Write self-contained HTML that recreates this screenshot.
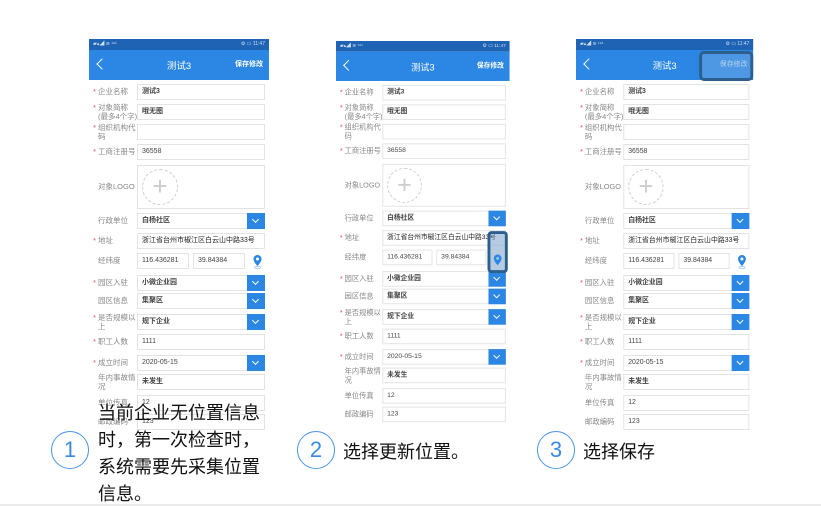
<!DOCTYPE html>
<html><head><meta charset="utf-8">
<style>
*{margin:0;padding:0;box-sizing:border-box}
body{width:821px;height:506px;background:#fff;position:relative;overflow:hidden;font-family:"Liberation Sans","Noto Sans CJK SC",sans-serif}
.ph{position:absolute;width:180px;height:392px;overflow:hidden;background:#fff;transform-origin:0 0}
.sb{position:absolute;left:0;top:0;width:180px;height:11px;background:#1f63b5;color:#cfe0f5;font-size:5px;line-height:11px}
.hd{position:absolute;left:0;top:11px;width:180px;height:30px;background:#2b87e3;color:#fff}
.hd .t{position:absolute;left:0;width:180px;text-align:center;top:8px;font-size:9.5px}
.hd .s{position:absolute;right:6px;top:9px;font-size:7px;font-weight:bold}
.hd .b{position:absolute;left:9px;top:10px;width:8px;height:8px;border-left:1.3px solid #fff;border-bottom:1.3px solid #fff;transform:rotate(45deg)}
.r{position:absolute;left:0;width:180px}
.l{position:absolute;left:9px;font-size:7.5px;color:#888;line-height:8.5px}
.l i{position:absolute;left:-5px;color:#e05050;font-style:normal}
.in{position:absolute;left:48px;width:128px;height:16px;border:1px solid #e3e3e3;font-size:7px;color:#444;line-height:14px;padding-left:4px;background:#fff}
.dd{position:absolute;right:4px;width:18px;height:16px;background:#2b87e3}
.dd:after{content:"";position:absolute;left:6px;top:4px;width:4px;height:4px;border-right:1px solid #fff;border-bottom:1px solid #fff;transform:rotate(45deg)}
.cap{position:absolute;font-size:18px;color:#111;line-height:27px;font-family:"Liberation Sans","Noto Sans CJK SC",sans-serif}
.cir{position:absolute;width:38px;height:38px;border:1.5px solid #4a95e6;border-radius:50%;color:#3a8ae0;font-size:22px;text-align:center;line-height:35px}
.ad{font-weight:normal!important;color:#222!important;font-size:7px!important;white-space:nowrap;overflow:hidden}
</style></head><body>

<div class="ph" style="left:89px;top:39px">
<div class="sb"><span style="margin-left:4px">▰▴◢ ≋ ¹⁹¹</span><span style="position:absolute;right:4px">⚙ ▭ 11:47</span></div>
<div class="hd"><div class="b"></div><div class="t">测试3</div><div class="s">保存修改</div></div>
<div class="r" style="top:45px"><div class="l" style="top:4px"><i>*</i>企业名称</div><div class="in" style="font-weight:bold">测试3</div></div>
<div class="r" style="top:65px"><div class="l" style="top:0"><i>*</i>对象简称<br>(最多4个字)</div><div class="in" style="font-weight:bold">哦无图</div></div>
<div class="r" style="top:85px"><div class="l" style="top:0"><i>*</i>组织机构代<br>码</div><div class="in"></div></div>
<div class="r" style="top:105px"><div class="l" style="top:4px"><i>*</i>工商注册号</div><div class="in">36558</div></div>
<div class="r" style="top:126px"><div class="l" style="top:18px">对象LOGO</div><div class="in" style="height:44px"><div style="position:absolute;left:4px;top:3px;width:36px;height:36px;border:1px dashed #ccc;border-radius:50%;color:#ccc;font-size:26px;text-align:center;line-height:33px">+</div></div></div>
<div class="r" style="top:174px"><div class="l" style="top:4px">行政单位</div><div class="in" style="font-weight:bold">白杨社区</div><div class="dd"></div></div>
<div class="r" style="top:194px"><div class="l" style="top:4px"><i>*</i>地址</div><div class="in ad">浙江省台州市椒江区白云山中路33号</div></div>
<div class="r" style="top:214px"><div class="l" style="top:4px">经纬度</div><div class="in" style="width:52px">116.436281</div><div class="in" style="left:104px;width:52px">39.84384</div>
<svg style="position:absolute;left:163px;top:1px" width="11" height="15" viewBox="0 0 11 15"><path d="M5.5 1a4 4 0 0 0-4 4c0 3 4 7 4 7s4-4 4-7a4 4 0 0 0-4-4z" fill="#2b87e3"/><circle cx="5.5" cy="5" r="1.5" fill="#fff"/><ellipse cx="5.5" cy="13.5" rx="3" ry="1" fill="none" stroke="#8bbcef" stroke-width=".7"/></svg></div>
<div class="r" style="top:236px"><div class="l" style="top:4px"><i>*</i>园区入驻</div><div class="in" style="font-weight:bold">小微企业园</div><div class="dd"></div></div>
<div class="r" style="top:254px"><div class="l" style="top:4px">园区信息</div><div class="in" style="font-weight:bold">集聚区</div><div class="dd"></div></div>
<div class="r" style="top:275px"><div class="l" style="top:0"><i>*</i>是否规模以<br>上</div><div class="in" style="font-weight:bold">规下企业</div><div class="dd"></div></div>
<div class="r" style="top:295px"><div class="l" style="top:4px"><i>*</i>职工人数</div><div class="in">1111</div></div>
<div class="r" style="top:316px"><div class="l" style="top:4px"><i>*</i>成立时间</div><div class="in">2020-05-15</div><div class="dd"></div></div>
<div class="r" style="top:335px"><div class="l" style="top:0">年内事故情<br>况</div><div class="in" style="font-weight:bold">未发生</div></div>
<div class="r" style="top:356px"><div class="l" style="top:4px">单位传真</div><div class="in">12</div></div>
<div class="r" style="top:375px"><div class="l" style="top:4px">邮政编码</div><div class="in">123</div></div>
</div>

<div class="ph" style="left:336px;top:41px;transform:scale(0.965,0.975);height:392px">
<div class="sb"><span style="margin-left:4px">▰▴◢ ≋ ¹⁹¹</span><span style="position:absolute;right:4px">⚙ ▭ 11:47</span></div>
<div class="hd"><div class="b"></div><div class="t">测试3</div><div class="s">保存修改</div></div>
<div class="r" style="top:45px"><div class="l" style="top:4px"><i>*</i>企业名称</div><div class="in" style="font-weight:bold">测试3</div></div>
<div class="r" style="top:65px"><div class="l" style="top:0"><i>*</i>对象简称<br>(最多4个字)</div><div class="in" style="font-weight:bold">哦无图</div></div>
<div class="r" style="top:85px"><div class="l" style="top:0"><i>*</i>组织机构代<br>码</div><div class="in"></div></div>
<div class="r" style="top:105px"><div class="l" style="top:4px"><i>*</i>工商注册号</div><div class="in">36558</div></div>
<div class="r" style="top:126px"><div class="l" style="top:18px">对象LOGO</div><div class="in" style="height:44px"><div style="position:absolute;left:4px;top:3px;width:36px;height:36px;border:1px dashed #ccc;border-radius:50%;color:#ccc;font-size:26px;text-align:center;line-height:33px">+</div></div></div>
<div class="r" style="top:174px"><div class="l" style="top:4px">行政单位</div><div class="in" style="font-weight:bold">白杨社区</div><div class="dd"></div></div>
<div class="r" style="top:194px"><div class="l" style="top:4px"><i>*</i>地址</div><div class="in ad">浙江省台州市椒江区白云山中路33号</div></div>
<div class="r" style="top:214px"><div class="l" style="top:4px">经纬度</div><div class="in" style="width:52px">116.436281</div><div class="in" style="left:104px;width:52px">39.84384</div></div>
<div class="r" style="top:236px"><div class="l" style="top:4px"><i>*</i>园区入驻</div><div class="in" style="font-weight:bold">小微企业园</div><div class="dd"></div></div>
<div class="r" style="top:254px"><div class="l" style="top:4px">园区信息</div><div class="in" style="font-weight:bold">集聚区</div><div class="dd"></div></div>
<div class="r" style="top:275px"><div class="l" style="top:0"><i>*</i>是否规模以<br>上</div><div class="in" style="font-weight:bold">规下企业</div><div class="dd"></div></div>
<div class="r" style="top:295px"><div class="l" style="top:4px"><i>*</i>职工人数</div><div class="in">1111</div></div>
<div class="r" style="top:316px"><div class="l" style="top:4px"><i>*</i>成立时间</div><div class="in">2020-05-15</div><div class="dd"></div></div>
<div class="r" style="top:335px"><div class="l" style="top:0">年内事故情<br>况</div><div class="in" style="font-weight:bold">未发生</div></div>
<div class="r" style="top:356px"><div class="l" style="top:4px">单位传真</div><div class="in">12</div></div>
<div class="r" style="top:375px"><div class="l" style="top:4px">邮政编码</div><div class="in">123</div></div>
<div style="position:absolute;left:157px;top:195px;width:21px;height:43px;border:3px solid #2d5f8e;border-radius:4px;background:rgba(120,160,200,.55)">
<svg style="position:absolute;left:2px;top:20px" width="11" height="15" viewBox="0 0 11 15"><path d="M5.5 1a4 4 0 0 0-4 4c0 3 4 7 4 7s4-4 4-7a4 4 0 0 0-4-4z" fill="#2b87e3"/><circle cx="5.5" cy="5" r="1.5" fill="#9cc"/></svg></div>
</div>

<div class="ph" style="left:576px;top:39px;transform:scale(0.985,1)">
<div class="sb"><span style="margin-left:4px">▰▴◢ ≋ ¹⁹¹</span><span style="position:absolute;right:4px">⚙ ▭ 11:47</span></div>
<div class="hd"><div class="b"></div><div class="t">测试3</div><div class="s" style="color:#cfe3f7;font-weight:normal">保存修改</div></div>
<div style="position:absolute;left:125px;top:12px;width:55px;height:30px;border:3px solid #2d5f8e;border-radius:5px;background:rgba(140,180,225,.35)"></div>
<div class="r" style="top:45px"><div class="l" style="top:4px"><i>*</i>企业名称</div><div class="in" style="font-weight:bold">测试3</div></div>
<div class="r" style="top:65px"><div class="l" style="top:0"><i>*</i>对象简称<br>(最多4个字)</div><div class="in" style="font-weight:bold">哦无图</div></div>
<div class="r" style="top:85px"><div class="l" style="top:0"><i>*</i>组织机构代<br>码</div><div class="in"></div></div>
<div class="r" style="top:105px"><div class="l" style="top:4px"><i>*</i>工商注册号</div><div class="in">36558</div></div>
<div class="r" style="top:126px"><div class="l" style="top:18px">对象LOGO</div><div class="in" style="height:44px"><div style="position:absolute;left:4px;top:3px;width:36px;height:36px;border:1px dashed #ccc;border-radius:50%;color:#ccc;font-size:26px;text-align:center;line-height:33px">+</div></div></div>
<div class="r" style="top:174px"><div class="l" style="top:4px">行政单位</div><div class="in" style="font-weight:bold">白杨社区</div><div class="dd"></div></div>
<div class="r" style="top:194px"><div class="l" style="top:4px"><i>*</i>地址</div><div class="in ad">浙江省台州市椒江区白云山中路33号</div></div>
<div class="r" style="top:214px"><div class="l" style="top:4px">经纬度</div><div class="in" style="width:52px">116.436281</div><div class="in" style="left:104px;width:52px">39.84384</div>
<svg style="position:absolute;left:163px;top:1px" width="11" height="15" viewBox="0 0 11 15"><path d="M5.5 1a4 4 0 0 0-4 4c0 3 4 7 4 7s4-4 4-7a4 4 0 0 0-4-4z" fill="#2b87e3"/><circle cx="5.5" cy="5" r="1.5" fill="#fff"/><ellipse cx="5.5" cy="13.5" rx="3" ry="1" fill="none" stroke="#8bbcef" stroke-width=".7"/></svg></div>
<div class="r" style="top:236px"><div class="l" style="top:4px"><i>*</i>园区入驻</div><div class="in" style="font-weight:bold">小微企业园</div><div class="dd"></div></div>
<div class="r" style="top:254px"><div class="l" style="top:4px">园区信息</div><div class="in" style="font-weight:bold">集聚区</div><div class="dd"></div></div>
<div class="r" style="top:275px"><div class="l" style="top:0"><i>*</i>是否规模以<br>上</div><div class="in" style="font-weight:bold">规下企业</div><div class="dd"></div></div>
<div class="r" style="top:295px"><div class="l" style="top:4px"><i>*</i>职工人数</div><div class="in">1111</div></div>
<div class="r" style="top:316px"><div class="l" style="top:4px"><i>*</i>成立时间</div><div class="in">2020-05-15</div><div class="dd"></div></div>
<div class="r" style="top:335px"><div class="l" style="top:0">年内事故情<br>况</div><div class="in" style="font-weight:bold">未发生</div></div>
<div class="r" style="top:356px"><div class="l" style="top:4px">单位传真</div><div class="in">12</div></div>
<div class="r" style="top:375px"><div class="l" style="top:4px">邮政编码</div><div class="in">123</div></div>
</div>

<div class="cir" style="left:51px;top:431px">1</div>
<div class="cap" style="left:98px;top:400px;width:180px">当前企业无位置信息<br>时，第一次检查时，<br>系统需要先采集位置<br>信息。</div>
<div class="cir" style="left:297px;top:431px">2</div>
<div class="cap" style="left:343px;top:439px">选择更新位置。</div>
<div class="cir" style="left:537px;top:431px">3</div>
<div class="cap" style="left:583px;top:439px">选择保存</div>
<div style="position:absolute;left:0;top:504px;width:821px;height:2px;background:#ececec"></div>
</body></html>
